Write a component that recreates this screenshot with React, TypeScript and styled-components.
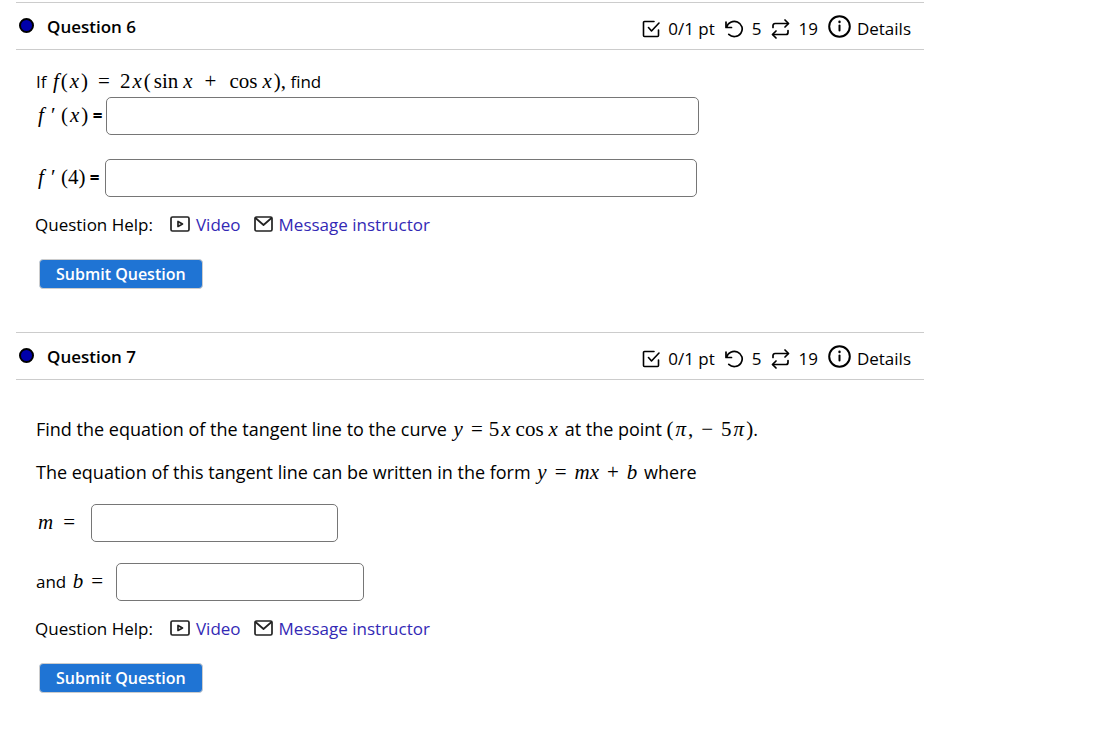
import React from 'react';
import styled, { createGlobalStyle } from 'styled-components';

const GlobalStyle = createGlobalStyle`
  body {
    margin: 0;
    background: #fff;
    color: #000;
    font-family: 'Trebuchet MS', 'Open Sans', 'Noto Sans', sans-serif;
    font-size: 17px;
    line-height: 24px;
  }
`;

const Page = styled.main`
  max-width: 908px;
  padding: 2px 16px 0;
`;

const QuestionHeader = styled.header`
  box-sizing: border-box;
  display: flex;
  align-items: center;
  height: 48px;
  border-top: 1px solid #ccc;
  border-bottom: 1px solid #ccc;
  padding: 2px 13px 0 3px;
`;

const StatusDot = styled.span`
  box-sizing: border-box;
  width: 15px;
  height: 15px;
  margin: 0 13px 4px 0;
  border: 2px solid #000;
  border-radius: 50%;
  background: #00a;
`;

const Title = styled.h2`
  flex: 1;
  margin: 0;
  font-size: 17px;
  font-weight: 600;
`;

const Stats = styled.div`
  display: flex;
  align-items: center;
  gap: 10px;
  padding-top: 4px;
`;

const Stat = styled.span`
  display: flex;
  align-items: center;
  gap: 8px;
  white-space: nowrap;

  svg {
    flex: none;
  }
`;

const DetailsButton = styled.button`
  display: flex;
  align-items: center;
  gap: 6px;
  padding: 0;
  border: 0;
  background: none;
  color: inherit;
  font: inherit;

  svg {
    margin-bottom: 6px;
  }
`;

const QuestionBody = styled.form<{ $top: number }>`
  padding: ${(p) => p.$top}px 0 43px 20px;
`;

const Prompt = styled.p<{ $after: number; $large?: boolean }>`
  margin: 0 0 ${(p) => p.$after}px;
  font-size: ${(p) => (p.$large ? 18 : 17)}px;
`;

const Fields = styled.div<{ $gap: number }>`
  display: flex;
  flex-direction: column;
  gap: ${(p) => p.$gap}px;
`;

const FieldRow = styled.div`
  display: flex;
  align-items: center;
`;

const FieldLabel = styled.label<{ $width: number }>`
  flex: 0 0 ${(p) => p.$width}px;
  padding-bottom: 1px;
  white-space: nowrap;
`;

const AnswerInput = styled.input<{ $width: number }>`
  box-sizing: border-box;
  flex: 0 1 ${(p) => p.$width}px;
  min-width: 0;
  height: 38px;
  padding: 4px 8px;
  border: 1px solid #767676;
  border-radius: 5px;
  font: inherit;
`;

const Var = styled.i`
  padding: 0 2px;
`;

const Rel = styled.span`
  margin: 0 8px;
`;

const Fn = styled.span`
  margin: 0 3px;
`;

const MathText = styled.span<{ $spacing?: 'loose' | 'tight' }>`
  font-family: 'Liberation Serif', serif;
  font-size: 21px;
  line-height: 20px;
  white-space: nowrap;

  ${Rel} {
    margin: 0 ${(p) => (p.$spacing === 'loose' ? 10 : p.$spacing === 'tight' ? 6 : 8)}px;
  }
`;

const HelpRow = styled.div`
  display: flex;
  align-items: center;
  gap: 13px;
  margin: 16px 0 22px -1px;
`;

const HelpTitle = styled.span`
  margin-right: 4px;
`;

const HelpItem = styled.span`
  display: flex;
  align-items: center;
  gap: 6px;

  svg {
    margin-bottom: 2px;
  }
`;

const HelpLink = styled.a`
  color: #3329b5;
  text-decoration: none;
`;

const SubmitButton = styled.button`
  display: block;
  height: 30px;
  margin-left: 3px;
  padding: 0 16px;
  border: 1px solid #ccc;
  border-radius: 4px;
  background: #1f74d4;
  color: #fff;
  font: inherit;
  font-size: 16px;
  font-weight: 600;
  line-height: 28px;
`;

const strokeProps = {
  fill: 'none',
  stroke: '#000',
  strokeLinecap: 'round' as const,
  strokeLinejoin: 'round' as const,
  'aria-hidden': true,
};

const CheckIcon = () => (
  <svg width="18" height="18" viewBox="0 0 18 18" strokeWidth="1.6" {...strokeProps}>
    <path d="M12 1.500H2.500a1 1 0 0 0-1 1v13a1 1 0 0 0 1 1h13a1 1 0 0 0 1-1V10" />
    <path d="M6.500 7.500l3 3.500L17 3" />
  </svg>
);

const UndoIcon = () => (
  <svg width="19" height="18" viewBox="0 0 19 18" strokeWidth="1.7" {...strokeProps}>
    <path d="M1 2v5.500h5.500" />
    <path d="M1.600 7.200a7.900 7.600 0 1 1 2.200 7.200" />
  </svg>
);

const RetryIcon = () => (
  <svg width="19" height="20" viewBox="0 0 19 20" strokeWidth="1.7" {...strokeProps}>
    <path d="M14 1l3.500 3.500L14 8" />
    <path d="M2 8.500V6.500a2 2 0 0 1 2-2h13" />
    <path d="M5 12L1.500 15.500 5 19" />
    <path d="M17 11.500v2a2 2 0 0 1-2 2H2" />
  </svg>
);

const InfoIcon = () => (
  <svg width="23" height="23" viewBox="0 0 23 23" strokeWidth="2" {...strokeProps}>
    <circle cx="11.5" cy="11.5" r="10.3" />
    <path d="M11.500 10.500v5" />
    <path d="M11.500 6.800v.2" strokeWidth="2.4" />
  </svg>
);

const VideoIcon = () => (
  <svg width="20" height="16" viewBox="0 0 20 16" strokeWidth="1.7" {...strokeProps} stroke="#222">
    <rect x="1" y="1" width="18" height="14" rx="1.5" />
    <path d="M8 5.500v5l4.500-2.500z" />
  </svg>
);

const MailIcon = () => (
  <svg width="19" height="16" viewBox="0 0 19 16" strokeWidth="1.7" {...strokeProps} stroke="#222">
    <rect x="1" y="1" width="17" height="14" rx="1.5" />
    <path d="M1.500 2l8 7 8-7" />
  </svg>
);

function Header({ number }: { number: number }) {
  return (
    <QuestionHeader>
      <StatusDot />
      <Title>Question {number}</Title>
      <Stats>
        <Stat><CheckIcon />0/1 pt</Stat>
        <Stat><UndoIcon />5</Stat>
        <Stat><RetryIcon />19</Stat>
        <DetailsButton type="button"><InfoIcon />Details</DetailsButton>
      </Stats>
    </QuestionHeader>
  );
}

function Footer() {
  return (
    <>
      <HelpRow>
        <HelpTitle>Question Help:</HelpTitle>
        <HelpItem><VideoIcon /><HelpLink href="#video">Video</HelpLink></HelpItem>
        <HelpItem><MailIcon /><HelpLink href="#message">Message instructor</HelpLink></HelpItem>
      </HelpRow>
      <SubmitButton type="submit">Submit Question</SubmitButton>
    </>
  );
}

const onSubmit = (e: React.FormEvent) => e.preventDefault();

export default function App() {
  return (
    <>
      <GlobalStyle />
      <Page>
        <section>
          <Header number={6} />
          <QuestionBody $top={20} onSubmit={onSubmit}>
            <Prompt $after={3}>
              If{' '}
              <MathText $spacing="loose">
                <Var>f</Var>(<Var>x</Var>)<Rel>=</Rel>2<Var>x</Var>(<Fn>sin</Fn><Var>x</Var><Rel>+</Rel><Fn>cos</Fn><Var>x</Var>),
              </MathText>{' '}
              find
            </Prompt>
            <Fields $gap={24}>
              <FieldRow>
                <FieldLabel htmlFor="derivative" $width={70}>
                  <MathText><Var>f</Var> ′ (<Var>x</Var>)</MathText> <b>=</b>
                </FieldLabel>
                <AnswerInput id="derivative" $width={593} />
              </FieldRow>
              <FieldRow>
                <FieldLabel htmlFor="derivative-at-4" $width={69}>
                  <MathText><Var>f</Var> ′ (4)</MathText> <b>=</b>
                </FieldLabel>
                <AnswerInput id="derivative-at-4" $width={592} />
              </FieldRow>
            </Fields>
            <Footer />
          </QuestionBody>
        </section>
        <section>
          <Header number={7} />
          <QuestionBody $top={37} onSubmit={onSubmit}>
            <Prompt $after={19} $large>
              Find the equation of the tangent line to the curve{' '}
              <MathText $spacing="tight">
                <Var>y</Var><Rel>=</Rel>5<Var>x</Var><Fn>cos</Fn><Var>x</Var>
              </MathText>{' '}
              at the point{' '}
              <MathText>
                (<Var>π</Var>,<Rel>−</Rel>5<Var>π</Var>)
              </MathText>
              .
            </Prompt>
            <Prompt $after={20} $large>
              The equation of this tangent line can be written in the form{' '}
              <MathText $spacing="tight">
                <Var>y</Var><Rel>=</Rel><Var>mx</Var><Rel>+</Rel><Var>b</Var>
              </MathText>{' '}
              where
            </Prompt>
            <Fields $gap={21}>
              <FieldRow>
                <FieldLabel htmlFor="slope" $width={55}>
                  <MathText><Var>m</Var><Rel>=</Rel></MathText>
                </FieldLabel>
                <AnswerInput id="slope" $width={247} />
              </FieldRow>
              <FieldRow>
                <FieldLabel htmlFor="intercept" $width={80}>
                  and <MathText $spacing="tight"><Var>b</Var><Rel>=</Rel></MathText>
                </FieldLabel>
                <AnswerInput id="intercept" $width={248} />
              </FieldRow>
            </Fields>
            <Footer />
          </QuestionBody>
        </section>
      </Page>
    </>
  );
}
